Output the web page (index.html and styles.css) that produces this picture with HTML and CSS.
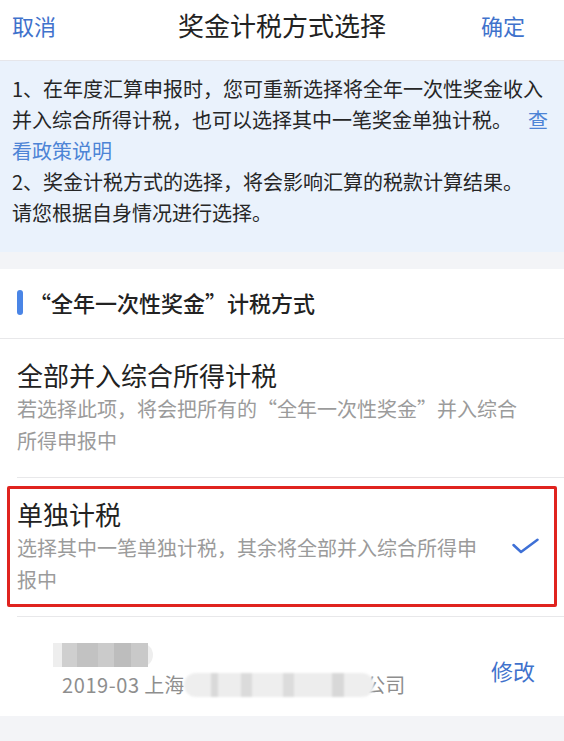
FILE: index.html
```html
<!DOCTYPE html>
<html lang="zh-CN">
<head>
<meta charset="utf-8">
<title>奖金计税方式选择</title>
<link rel="stylesheet" href="styles.css">
</head>
<body>
<div class="page">
  <header class="navbar">
    <span class="nav-btn nav-left">取消</span>
    <span class="nav-title">奖金计税方式选择</span>
    <span class="nav-btn nav-right">确定</span>
  </header>

  <section class="notice">
    <p>1、在年度汇算申报时，您可重新选择将全年一次性奖金收入并入综合所得计税，也可以选择其中一笔奖金单独计税。<span class="link">查看政策说明</span></p>
    <p>2、奖金计税方式的选择，将会影响汇算的税款计算结果。<br>请您根据自身情况进行选择。</p>
  </section>

  <section class="card">
    <div class="card-head">
      <span class="bar"></span>
      <span class="card-title">“全年一次性奖金”计税方式</span>
    </div>
    <div class="options">
      <div class="option">
        <div class="option-text">
          <div class="option-title">全部并入综合所得计税</div>
          <div class="option-desc">若选择此项，将会把所有的“全年一次性奖金”并入综合所得申报中</div>
        </div>
      </div>
      <div class="option selected">
        <div class="option-text">
          <div class="option-title">单独计税</div>
          <div class="option-desc">选择其中一笔单独计税，其余将全部并入综合所得申报中</div>
        </div>
        <svg class="check" width="27" height="16" viewBox="0 0 27 16"><path d="M1.5 7 L9 14 L25.5 1.8" fill="none" stroke="#3e70d6" stroke-width="2.5" stroke-linecap="round" stroke-linejoin="round"/></svg>
        <div class="highlight"></div>
      </div>
    </div>
    <div class="employer">
      <div class="employer-info">
        <div class="name-blur"><span class="px"></span></div>
        <div class="employer-line"><span class="date">2019-03</span>&nbsp;上海<span class="company-blur"></span>公司</div>
      </div>
      <span class="edit">修改</span>
    </div>
  </section>
</div>
</body>
</html>
```

FILE: styles.css
```css
* { box-sizing: border-box; }
html, body { margin: 0; padding: 0; }
body {
  background: #f3f4f7;
  font-family: "Noto Sans CJK SC", "Noto Sans", sans-serif;
  color: #222;
}
.page { width: 564px; min-height: 741px; }

.navbar {
  display: grid;
  grid-template-columns: 1fr auto 1fr;
  align-items: center;
  height: 61px;
  padding: 0 12px 11px;
  background: #fff;
  border-bottom: 1px solid #e6e6ea;
}
.nav-btn { font-size: 22px; color: #3f72cc; }
.nav-left { justify-self: start; }
.nav-right { justify-self: end; padding-right: 27px; }
.nav-title { font-size: 26px; color: #222; }

.notice {
  background: #eaf2fc;
  padding: 12px 12px 24px;
  font-size: 20px;
  line-height: 31px;
  color: #262626;
}
.notice p { margin: 0; }
.link { color: #4d84d6; padding-left: 16px; }

.card {
  margin-top: 17px;
  background: #fff;
}
.card-head {
  display: flex;
  align-items: center;
  height: 70px;
  padding: 0 0 3px 17px;
  border-bottom: 1px solid #e8e8ea;
}
.bar {
  width: 6px;
  height: 25px;
  border-radius: 3px;
  background: #4a85e6;
  margin-right: 6px;
}
.card-title { font-size: 22px; font-weight: 500; color: #222; }

.options { padding-left: 17px; }
.option {
  position: relative;
  display: flex;
  align-items: center;
  padding: 18px 25px 20px 0;
  border-bottom: 1px solid #e8e8ea;
}
.option-text { flex: 1; }
.option-title { font-size: 26px; line-height: 36px; color: #222; }
.option-desc {
  font-size: 20px;
  line-height: 32px;
  color: #9b9b9b;
  padding-right: 12px;
}
.check { margin-left: 12px; flex: none; }
.highlight {
  position: absolute;
  top: 8px;
  left: -10px;
  right: 7px;
  bottom: 9px;
  border: 3px solid #e0231f;
  border-radius: 2px;
  pointer-events: none;
}

.employer {
  display: flex;
  align-items: center;
  justify-content: space-between;
  padding: 26px 29px 19px 62px;
}
.name-blur {
  width: 100px;
  height: 24px;
  margin-left: -9px;
  margin-bottom: 6px;
  padding-left: 9px;
  border-radius: 0 12px 12px 0;
  background: #eeeeee;
}
.name-blur .px {
  display: block;
  width: 86px;
  height: 24px;
  background: linear-gradient(90deg, #cfcfcf 0 18%, #c2c2c2 18% 42%, #cbcbcb 42% 60%, #bdbdbd 60% 80%, #c9c9c9 80% 100%);
  filter: blur(0.6px);
}
.employer-line {
  display: flex;
  align-items: center;
  font-size: 20px;
  line-height: 24px;
  color: #8e8e8e;
  white-space: nowrap;
}
.date { letter-spacing: 0.6px; }
.company-blur {
  display: inline-block;
  width: 190px;
  height: 24px;
  border-radius: 12px;
  background: linear-gradient(90deg, #eeeeee 0 14%, #d9d9d9 14% 18%, #ededed 18% 30%, #dbdbdb 30% 36%, #eeeeee 36% 52%, #dcdcdc 52% 58%, #ededed 58% 78%, #d8d8d8 78% 84%, #eeeeee 84% 100%);
  filter: blur(0.8px);
  margin-right: -9px;
}
.edit { font-size: 22px; color: #3f72cc; }
```
